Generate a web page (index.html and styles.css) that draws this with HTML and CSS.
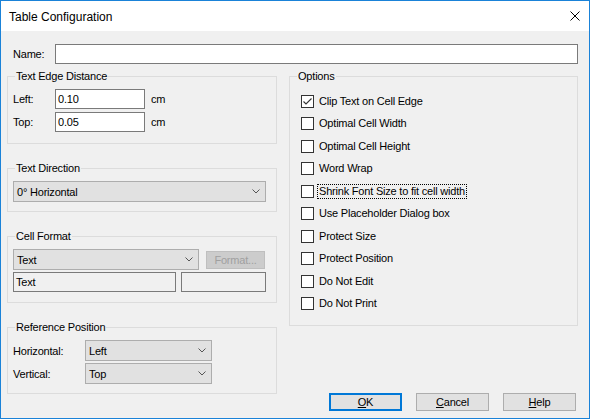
FILE: index.html
```html
<!DOCTYPE html>
<html>
<head>
<meta charset="utf-8">
<link rel="stylesheet" href="styles.css">
</head>
<body>
<div class="window">
  <div class="titlebar">
    <span class="title">Table Configuration</span>
    <svg class="close" width="10" height="10" viewBox="0 0 10 10"><path d="M0.5 0.5 L9.5 9.5 M9.5 0.5 L0.5 9.5" stroke="#000" stroke-width="1" fill="none"/></svg>
  </div>
  <div class="content">
    <div class="name-row">
      <span class="label">Name:</span>
      <div class="input input-wide"></div>
    </div>
    <div class="columns">
      <div class="left-col">
        <div class="group g-edge">
          <span class="group-title">Text Edge Distance</span>
          <div class="field-row">
            <span class="label">Left:</span>
            <div class="input input-num">0.10</div>
            <span class="unit">cm</span>
          </div>
          <div class="field-row">
            <span class="label">Top:</span>
            <div class="input input-num">0.05</div>
            <span class="unit">cm</span>
          </div>
        </div>
        <div class="group g-dir">
          <span class="group-title">Text Direction</span>
          <div class="select sel-dir"><span>0° Horizontal</span><svg class="chev" width="8" height="5" viewBox="0 0 8 5"><path d="M0.5 0.5 L4 4 L7.5 0.5" stroke="#555" fill="none"/></svg></div>
        </div>
        <div class="group g-cell">
          <span class="group-title">Cell Format</span>
          <div class="cell-row">
            <div class="select sel-cell"><span>Text</span><svg class="chev" width="8" height="5" viewBox="0 0 8 5"><path d="M0.5 0.5 L4 4 L7.5 0.5" stroke="#555" fill="none"/></svg></div>
            <div class="btn btn-disabled">Format...</div>
          </div>
          <div class="cell-row cell-row2">
            <div class="input ro ro-1">Text</div>
            <div class="input ro ro-2"></div>
          </div>
        </div>
        <div class="group g-ref">
          <span class="group-title">Reference Position</span>
          <div class="ref-row">
            <span class="ref-label">Horizontal:</span>
            <div class="select sel-ref"><span>Left</span><svg class="chev" width="8" height="5" viewBox="0 0 8 5"><path d="M0.5 0.5 L4 4 L7.5 0.5" stroke="#555" fill="none"/></svg></div>
          </div>
          <div class="ref-row ref-row2">
            <span class="ref-label">Vertical:</span>
            <div class="select sel-ref"><span>Top</span><svg class="chev" width="8" height="5" viewBox="0 0 8 5"><path d="M0.5 0.5 L4 4 L7.5 0.5" stroke="#555" fill="none"/></svg></div>
          </div>
        </div>
      </div>
      <div class="right-col">
        <div class="group g-opt">
          <span class="group-title">Options</span>
          <div class="cb-row"><span class="cb"><svg width="11" height="11" viewBox="0 0 11 11"><path d="M1.5 5.5 L4 8 L9.5 2.5" stroke="#333" stroke-width="1.1" fill="none"/></svg></span><span class="cb-text">Clip Text on Cell Edge</span></div>
          <div class="cb-row"><span class="cb"></span><span class="cb-text">Optimal Cell Width</span></div>
          <div class="cb-row"><span class="cb"></span><span class="cb-text">Optimal Cell Height</span></div>
          <div class="cb-row"><span class="cb"></span><span class="cb-text">Word Wrap</span></div>
          <div class="cb-row"><span class="cb"></span><span class="cb-text focus">Shrink Font Size to fit cell width</span></div>
          <div class="cb-row"><span class="cb"></span><span class="cb-text">Use Placeholder Dialog box</span></div>
          <div class="cb-row"><span class="cb"></span><span class="cb-text">Protect Size</span></div>
          <div class="cb-row"><span class="cb"></span><span class="cb-text">Protect Position</span></div>
          <div class="cb-row"><span class="cb"></span><span class="cb-text">Do Not Edit</span></div>
          <div class="cb-row"><span class="cb"></span><span class="cb-text">Do Not Print</span></div>
        </div>
        <div class="buttons">
          <div class="btn btn-main btn-default"><span><u>O</u>K</span></div>
          <div class="btn btn-main"><span><u>C</u>ancel</span></div>
          <div class="btn btn-main"><span><u>H</u>elp</span></div>
        </div>
      </div>
    </div>
  </div>
</div>
</body>
</html>
```

FILE: styles.css
```css
html, body {
  margin: 0;
  padding: 0;
  background: #f0f0f0;
}

.window {
  width: 590px;
  height: 419px;
  box-sizing: border-box;
  border: 1px solid #1a82d8;
  background: #f0f0f0;
  display: flex;
  flex-direction: column;
  font-family: "Liberation Sans", Arial, sans-serif;
  font-size: 11px;
  letter-spacing: -0.2px;
  color: #000;
}

.titlebar {
  flex: none;
  height: 30px;
  background: #fff;
  display: flex;
  align-items: center;
  justify-content: space-between;
  padding: 0 9px 0 8px;
}

.title {
  font-family: "Liberation Sans", Arial, sans-serif;
  font-size: 12px;
  letter-spacing: 0;
  padding-top: 1px;
}

.close {
  display: block;
}

.content {
  flex: 1;
  display: flex;
  flex-direction: column;
  padding: 13px 11px 0 6px;
}

.name-row {
  display: flex;
  align-items: center;
  height: 20px;
}

.label {
  width: 42px;
  flex: none;
}

.name-row .label {
  padding-left: 6px;
}

.input {
  box-sizing: border-box;
  height: 20px;
  border: 1px solid #7a7a7a;
  background: #fff;
  display: flex;
  align-items: center;
  padding-left: 2px;
}

.input-wide {
  flex: 1;
}

.columns {
  display: flex;
  gap: 12px;
  margin-top: 12px;
}

.left-col {
  width: 270px;
  display: flex;
  flex-direction: column;
  gap: 24px;
}

.right-col {
  width: 289px;
  display: flex;
  flex-direction: column;
}

.group {
  position: relative;
  box-sizing: border-box;
  border: 1px solid #dcdcdc;
}

.group-title {
  position: absolute;
  top: -7px;
  left: 7px;
  padding: 0 1px;
  line-height: 13px;
  background: #f0f0f0;
}

/* Text edge distance */
.g-edge {
  height: 68px;
  padding: 12px 0 0 5px;
}

.field-row {
  display: flex;
  align-items: center;
  height: 20px;
}

.field-row + .field-row {
  margin-top: 3px;
}

.input-num {
  width: 90px;
}

.unit {
  margin-left: 6px;
}

/* selects */
.select {
  box-sizing: border-box;
  height: 21px;
  border: 1px solid #adadad;
  background: #e1e1e1;
  display: flex;
  align-items: center;
  justify-content: space-between;
  padding: 0 5px 0 3px;
}

.chev {
  display: block;
}

.g-dir {
  height: 44px;
  padding: 12px 0 0 5px;
}

.sel-dir {
  width: 253px;
}

/* cell format */
.g-cell {
  height: 67px;
  padding: 12px 0 0 5px;
}

.cell-row {
  display: flex;
  align-items: center;
}

.cell-row2 {
  margin-top: 2px;
}

.sel-cell {
  width: 186px;
}

.btn {
  box-sizing: border-box;
  display: flex;
  align-items: center;
  justify-content: center;
  border: 1px solid #adadad;
  background: #e1e1e1;
}

.btn-disabled {
  width: 59px;
  height: 18px;
  margin-left: 7px;
  background: #cccccc;
  border-color: #bfbfbf;
  color: #a0a0a0;
}

.ro {
  background: #f0f0f0;
}

.ro-1 {
  width: 163px;
}

.ro-2 {
  width: 85px;
  margin-left: 5px;
}

/* reference position */
.g-ref {
  height: 67px;
  padding: 12px 0 0 5px;
}

.ref-row {
  display: flex;
  align-items: center;
}

.ref-row2 {
  margin-top: 2px;
}

.ref-label {
  width: 72px;
  flex: none;
}

.sel-ref {
  width: 127px;
}

/* options */
.g-opt {
  height: 250px;
  padding: 13px 0 0 11px;
}

.cb-row {
  display: flex;
  align-items: center;
  height: 22.5px;
}

.cb {
  box-sizing: border-box;
  width: 13px;
  height: 13px;
  flex: none;
  border: 1px solid #333;
  background: #fff;
  display: flex;
  align-items: center;
  justify-content: center;
}

.cb svg {
  display: block;
}

.cb-text {
  margin-left: 4px;
  padding: 0 1px;
  line-height: 13px;
}

.focus {
  outline: 1px dotted #000;
}

/* buttons */
.buttons {
  display: flex;
  justify-content: flex-end;
  gap: 14px;
  margin-top: 67px;
  margin-right: 2px;
}

.btn-main {
  width: 73px;
  height: 18px;
}

.btn-default {
  border: 2px solid #0078d7;
}
```
